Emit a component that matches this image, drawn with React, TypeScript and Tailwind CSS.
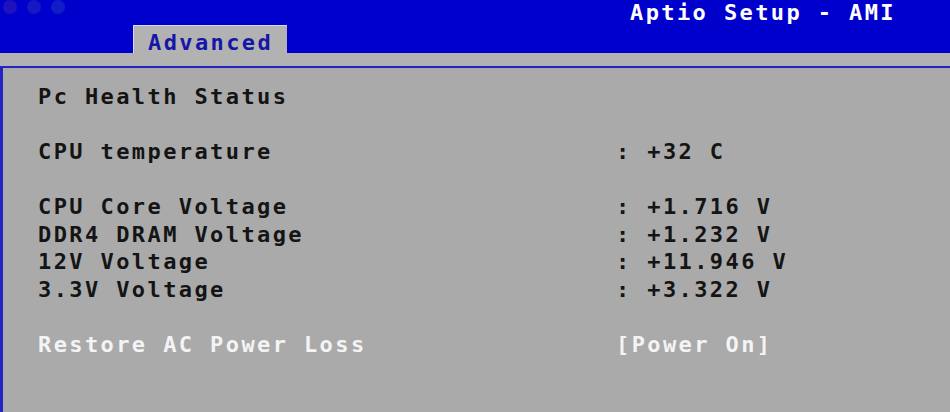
import React from "react";

const mono = { fontFamily: '"DejaVu Sans Mono", "Liberation Mono", monospace' };

type Row =
  | { kind: "blank" }
  | { kind: "text"; label: string; value?: string; light?: boolean };

const rows: Row[] = [
  { kind: "text", label: "Pc Health Status" },
  { kind: "blank" },
  { kind: "text", label: "CPU temperature", value: ": +32 C" },
  { kind: "blank" },
  { kind: "text", label: "CPU Core Voltage", value: ": +1.716 V" },
  { kind: "text", label: "DDR4 DRAM Voltage", value: ": +1.232 V" },
  { kind: "text", label: "12V Voltage", value: ": +11.946 V" },
  { kind: "text", label: "3.3V Voltage", value: ": +3.322 V" },
  { kind: "blank" },
  { kind: "text", label: "Restore AC Power Loss", value: "[Power On]", light: true },
];

export default function App() {
  return (
    <div
      className="relative w-[950px] h-[412px] overflow-hidden bg-[#aaaaaa] flex flex-col text-[22px] font-semibold tracking-[2.4px] whitespace-pre"
      style={mono}
    >
      {/* window controls of the capture frame */}
      <div className="absolute left-[3px] top-[0px] flex gap-[10px] opacity-40">
        <span className="block w-[14px] h-[14px] rounded-full bg-[#4a2fa8]" />
        <span className="block w-[14px] h-[14px] rounded-full bg-[#3a3ab8]" />
        <span className="block w-[14px] h-[14px] rounded-full bg-[#2d4ac0]" />
      </div>

      {/* header band */}
      <div className="h-[53px] bg-[#0000cc] flex flex-col shrink-0">
        <div className="h-[25px] flex justify-end pr-[54px]">
          <span className="leading-[25px] text-white">Aptio Setup - AMI</span>
        </div>
        <div className="flex-1 flex pl-[133px]">
          <div className="w-[154px] bg-[#b2b2b2] border-l border-t border-[#d8d8f4] pl-[14px]">
            <span className="leading-[24px] text-[#1616a6]">Advanced</span>
          </div>
        </div>
      </div>

      {/* strip under the tabs */}
      <div className="h-[13px] bg-[#b2b2b2] shrink-0" />
      <div className="h-[2px] bg-[#2424c4] shrink-0" />

      {/* main panel */}
      <div className="flex-1 border-l-[3px] border-[#2424c4] pt-[15px] pl-[35px]">
        <div className="grid grid-cols-[578px_1fr]">
          {rows.map((r, i) =>
            r.kind === "blank" ? (
              <div key={i} className="col-span-2 h-[27.5px]" />
            ) : (
              <React.Fragment key={i}>
                <div
                  className={`leading-[27.5px] ${r.light ? "text-[#f4f4f4]" : "text-[#141414]"}`}
                >
                  {r.label}
                </div>
                <div
                  className={`leading-[27.5px] ${r.light ? "text-[#f4f4f4]" : "text-[#141414]"}`}
                >
                  {r.value ?? ""}
                </div>
              </React.Fragment>
            )
          )}
        </div>
      </div>
    </div>
  );
}
